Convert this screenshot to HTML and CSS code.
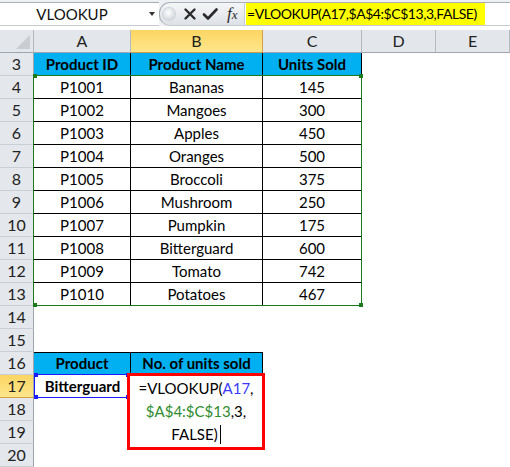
FILE: index.html
```html
<!DOCTYPE html>
<html>
<head>
<meta charset="utf-8">
<link rel="stylesheet" href="styles.css">
</head>
<body>
<div class="fbar">
  <div class="namebox"><span class="nb-text">VLOOKUP</span><span class="nb-arrow"></span></div>
  <div class="btns">
    <span class="knob"></span>
    <svg class="ico ico-x" width="14" height="14" viewBox="0 0 14 14"><path d="M2.5 2.5 L11.5 11.5 M11.5 2.5 L2.5 11.5" stroke="#2b2b2b" stroke-width="2.4" stroke-linecap="round"/></svg>
    <svg class="ico ico-ok" width="16" height="14" viewBox="0 0 16 14"><path d="M2 7.5 L6 11.5 L14.5 2.5" stroke="#2b2b2b" stroke-width="2.6" fill="none" stroke-linecap="round" stroke-linejoin="round"/></svg>
    <span class="fx">f<span class="fx-x">x</span></span>
  </div>
  <div class="formula"><span class="hl">=VLOOKUP(A17,$A$4:$C$13,3,FALSE)</span></div>
</div>
<div class="spacer"></div>
<div class="grid">
  <div class="corner"><svg width="14" height="14" viewBox="0 0 14 14"><polygon points="14,0 14,14 0,14" fill="#c9cdd2"/></svg></div>
  <div class="ch">A</div><div class="ch sel">B</div><div class="ch">C</div><div class="ch">D</div><div class="ch">E</div>

  <div class="rh">3</div><div class="t h">Product ID</div><div class="t h">Product Name</div><div class="t h">Units Sold</div><div class="c"></div><div class="c"></div>
  <div class="rh">4</div><div class="t">P1001</div><div class="t">Bananas</div><div class="t">145</div><div class="c"></div><div class="c"></div>
  <div class="rh">5</div><div class="t">P1002</div><div class="t">Mangoes</div><div class="t">300</div><div class="c"></div><div class="c"></div>
  <div class="rh">6</div><div class="t">P1003</div><div class="t">Apples</div><div class="t">450</div><div class="c"></div><div class="c"></div>
  <div class="rh">7</div><div class="t">P1004</div><div class="t">Oranges</div><div class="t">500</div><div class="c"></div><div class="c"></div>
  <div class="rh">8</div><div class="t">P1005</div><div class="t">Broccoli</div><div class="t">375</div><div class="c"></div><div class="c"></div>
  <div class="rh">9</div><div class="t">P1006</div><div class="t">Mushroom</div><div class="t">250</div><div class="c"></div><div class="c"></div>
  <div class="rh">10</div><div class="t">P1007</div><div class="t">Pumpkin</div><div class="t">175</div><div class="c"></div><div class="c"></div>
  <div class="rh">11</div><div class="t">P1008</div><div class="t">Bitterguard</div><div class="t">600</div><div class="c"></div><div class="c"></div>
  <div class="rh">12</div><div class="t">P1009</div><div class="t">Tomato</div><div class="t">742</div><div class="c"></div><div class="c"></div>
  <div class="rh">13</div><div class="t">P1010</div><div class="t">Potatoes</div><div class="t">467</div><div class="c"></div><div class="c"></div>
  <div class="rh">14</div><div class="c"></div><div class="c"></div><div class="c"></div><div class="c"></div><div class="c"></div>
  <div class="rh">15</div><div class="c"></div><div class="c"></div><div class="c"></div><div class="c"></div><div class="c"></div>
  <div class="rh">16</div><div class="t h top">Product</div><div class="t h top">No. of units sold</div><div class="c"></div><div class="c"></div><div class="c"></div>
  <div class="rh sel">17</div><div class="c b">Bitterguard</div><div class="c merged"></div><div class="c"></div><div class="c"></div><div class="c"></div>
  <div class="rh">18</div><div class="c"></div><div class="c"></div><div class="c"></div><div class="c"></div>
  <div class="rh">19</div><div class="c"></div><div class="c"></div><div class="c"></div><div class="c"></div>
  <div class="rh">20</div><div class="c"></div><div class="c"></div><div class="c"></div><div class="c"></div><div class="c"></div>

  <div class="range green"><i class="sq tl"></i><i class="sq tr"></i><i class="sq bl"></i><i class="sq br"></i></div>
  <div class="range blue"><i class="sq tl"></i><i class="sq tr"></i><i class="sq bl"></i><i class="sq br"></i></div>
  <div class="editbox">
    <div>=VLOOKUP(<span class="ref-a">A17</span>,</div>
    <div><span class="ref-g">$A$4:$C$13</span>,3,</div>
    <div>FALSE)<span class="caret"></span></div>
  </div>
</div>
</body>
</html>
```
FILE: styles.css
```css
html, body {
  margin: 0;
  padding: 0;
  background: #ffffff;
}
body {
  width: 510px;
  height: 467px;
  overflow: hidden;
  font-family: "Lato", "Liberation Sans", sans-serif;
  font-size: 15px;
  color: #000;
}
.fbar {
  height: 26px;
  padding-top: 2px;
  box-sizing: border-box;
  background: #eef0f3;
  display: flex;
}
.fbar > div {
  height: 24px;
  box-sizing: border-box;
  border-top: 1px solid #a9afb7;
  border-bottom: 1px solid #c6cbd1;
}
.namebox {
  width: 159px;
  background: #fff;
  display: flex;
  align-items: center;
}
.nb-text {
  width: 144px;
  text-align: center;
  font-size: 15px;
  color: #111;
}
.nb-arrow {
  margin-left: 5px;
  width: 0;
  height: 0;
  border-left: 3.5px solid transparent;
  border-right: 3.5px solid transparent;
  border-top: 4px solid #333;
}
.btns {
  width: 85px;
  display: flex;
  align-items: center;
  background: linear-gradient(#f5f6f8, #dde1e6);
  border-left: 1px solid #a9afb7;
  border-radius: 11px 0 0 11px;
}
.knob {
  width: 12px;
  height: 12px;
  margin-left: 3px;
  border-radius: 50%;
  background: radial-gradient(circle at 45% 40%, #ffffff 0%, #e4e7ea 45%, #c3c8ce 100%);
  box-shadow: 0 0 0 1px #cfd3d8;
}
.ico { display: block; }
.ico-x { margin-left: 8px; }
.ico-ok { margin-left: 5px; }
.fx {
  font-family: "Liberation Serif", serif;
  font-style: italic;
  font-size: 17px;
  line-height: 20px;
  color: #2b2b2b;
  margin-left: 9px;
}
.fx-x { font-size: 13px; }
.formula {
  flex: 1;
  background: #fff;
  border-left: 1px solid #c6cbd1;
  padding-left: 1px;
}
.hl {
  display: inline-block;
  height: 22px;
  line-height: 22px;
  background: #ffff00;
  padding: 0 8px 0 1px;
  font-size: 14px;
  letter-spacing: -0.45px;
  color: #000;
}
.spacer {
  height: 4px;
  background: #fff;
}
.grid {
  position: relative;
  display: grid;
  grid-template-columns: 34px 97px 132px 99px 74px 74px;
  grid-auto-rows: 23px;
}
.grid > div {
  box-sizing: border-box;
}
.corner {
  background: #e3e6ea;
  border-right: 1px solid #b5bac1;
  border-bottom: 1px solid #9ea5ae;
  display: flex;
  align-items: flex-end;
  justify-content: flex-end;
  padding: 0 3px 3px 0;
}
.corner svg { display: block; }
.ch {
  background: #e3e6ea;
  border-right: 1px solid #b5bac1;
  border-bottom: 1px solid #9ea5ae;
  text-align: center;
  line-height: 22px;
  font-size: 16px;
  color: #222;
}
.ch.sel {
  background: linear-gradient(#fbd562, #ffe68c);
  border-right: 1px solid #d6a046;
  border-bottom: 1px solid #c99a4a;
}
.rh {
  background: #e4e7eb;
  border-right: 1px solid #9ea5ae;
  border-bottom: 1px solid #c9ced4;
  text-align: center;
  line-height: 22px;
  font-size: 16px;
  color: #222;
}
.rh.sel {
  background: linear-gradient(#fbd562, #ffe68c);
  border-bottom: 1px solid #d6a046;
}
.c {
  background: #fff;
  text-align: center;
  line-height: 22px;
}
.t {
  background: #fff;
  border-right: 1px solid #000;
  border-bottom: 1px solid #000;
  text-align: center;
  line-height: 22px;
}
.h {
  background: #00b0f0;
  font-weight: bold;
}
.top {
  border-top: 1px solid #000;
  line-height: 20px;
}
.b { font-weight: bold; }
.merged { grid-row: span 3; }
.range {
  position: absolute;
  box-sizing: border-box;
  pointer-events: none;
}
.range.green {
  left: 33px;
  top: 45px;
  width: 329px;
  height: 231px;
  border: 1px solid #1b7a1b;
}
.range.blue {
  left: 34px;
  top: 344px;
  width: 95px;
  height: 24px;
  border: 1px solid #1a1aff;
}
.sq {
  position: absolute;
  width: 4px;
  height: 4px;
}
.green .sq { background: #1b7a1b; }
.blue .sq { background: #1a1aff; }
.sq.tl { left: -1px; top: -2px; }
.sq.tr { right: -2px; top: -2px; }
.sq.bl { left: -1px; bottom: -2px; }
.sq.br { right: -2px; bottom: -2px; }
.editbox {
  position: absolute;
  left: 127px;
  top: 343px;
  width: 138px;
  height: 77px;
  box-sizing: border-box;
  border: 3px solid #ff0000;
  background: #fff;
  text-align: center;
  line-height: 23px;
  padding-top: 1px;
  color: #000;
}
.ref-a { color: #3a3aff; }
.ref-g { color: #2e8b2e; }
.caret {
  display: inline-block;
  width: 1px;
  height: 19px;
  background: #000;
  margin-left: 2px;
  vertical-align: -4px;
}
```
